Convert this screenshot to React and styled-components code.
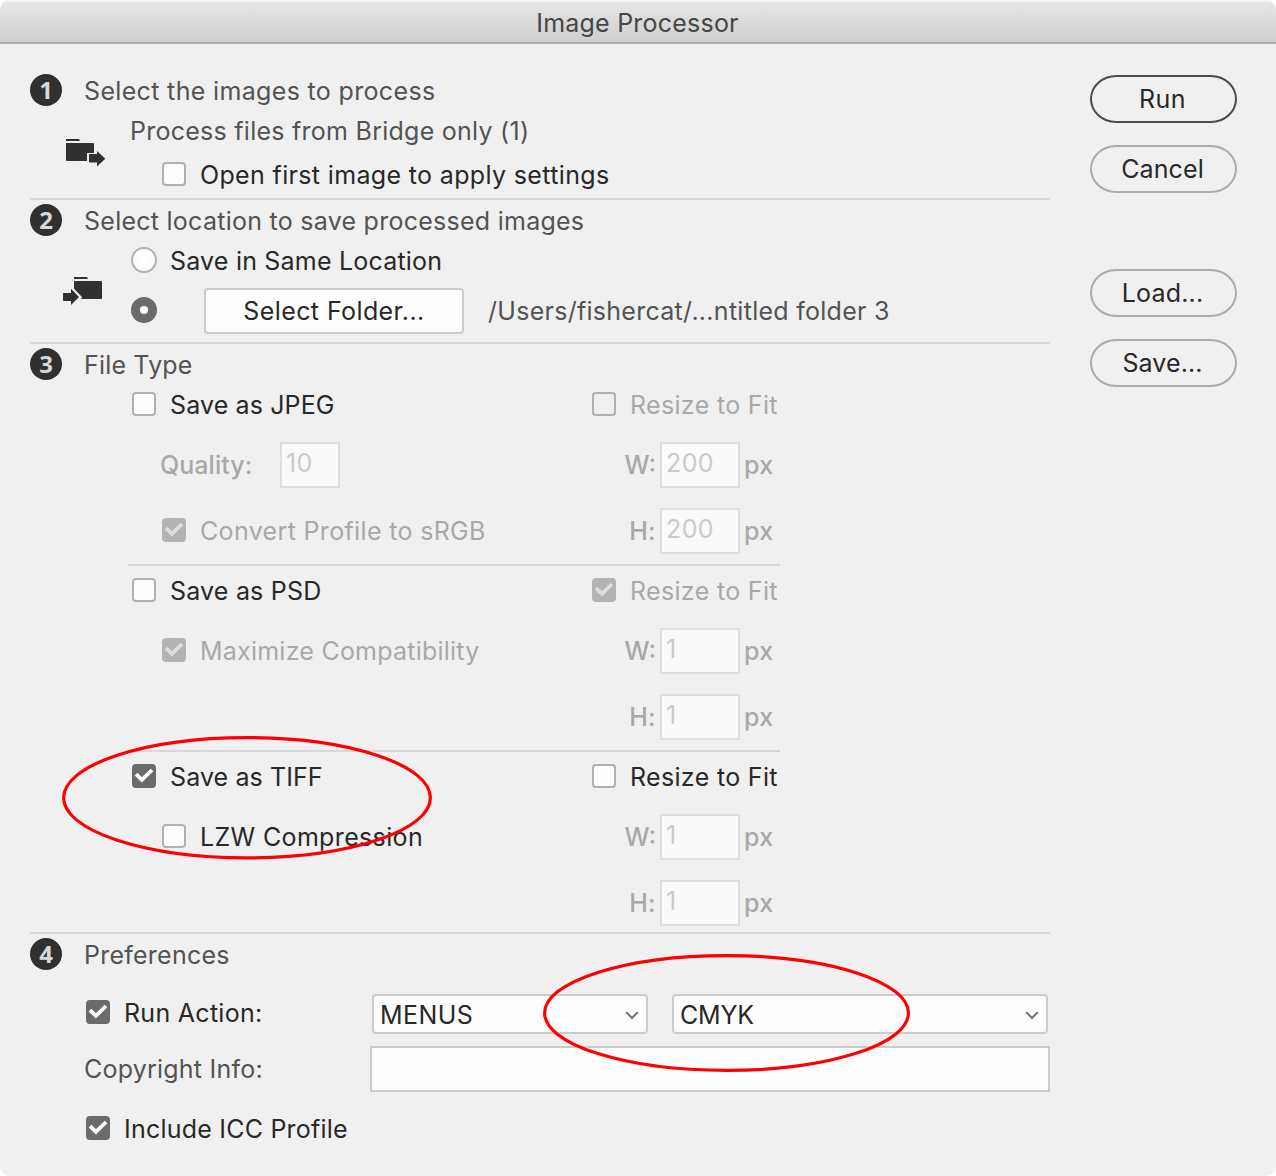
import React from "react";
import styled, { createGlobalStyle } from "styled-components";

const GlobalStyle = createGlobalStyle`
  body { margin: 0; background: #fff; }
  *, *::before, *::after { box-sizing: border-box; }
`;

const color = {
  window: "#f0f0f0",
  heading: "#535353",
  text: "#282828",
  disabled: "#a8a8a8",
  rule: "#d8d8d8",
};

const Window = styled.div`
  position: relative;
  width: 1276px;
  height: 1176px;
  overflow: hidden;
  border-radius: 10px;
  background: ${color.window};
  color: ${color.text};
  font-family: Inter, "Liberation Sans", sans-serif;
  font-size: 25px;
  line-height: 30px;
  letter-spacing: 0.3px;
  white-space: nowrap;
`;

const TitleBar = styled.header`
  display: flex;
  align-items: center;
  justify-content: center;
  height: 44px;
  padding: 4px 1px 0 0;
  border-bottom: 2px solid #acacac;
  background: linear-gradient(#e8e8e8, #cecece);
  box-shadow: inset 0 2px 0 #f3f3f3;
  color: #464646;
  letter-spacing: 0.22px;
`;

const Content = styled.div`
  display: flex;
  gap: 39.5px;
  padding: 0 30px;
`;

const Main = styled.main`
  width: 1020px;
  padding-top: 26px;
`;

const Sidebar = styled.aside`
  display: flex;
  flex-direction: column;
  gap: 22px;
  padding-top: 31px;
`;

const PillButton = styled.button`
  width: 147px;
  height: 48px;
  margin: ${(p) => (p.$apart ? "54px" : "0")} 0 0;
  padding: 0 1px 0 0;
  border: 2px solid ${(p) => (p.$primary ? "#4b4b4b" : "#ababab")};
  border-radius: 26px / 24px;
  background: transparent;
  color: ${color.text};
  font: inherit;
  letter-spacing: ${(p) => p.$ls ?? 0.2}px;
`;

const Section = styled.section`
  border-bottom: ${(p) => (p.$last ? "0" : `2px solid ${color.rule}`)};
  padding-bottom: ${(p) => p.$pad ?? 0}px;
`;

const SectionHeader = styled.div`
  display: flex;
  align-items: center;
  gap: 22px;
  height: 40px;
`;

const Badge = styled.span`
  display: flex;
  align-items: center;
  justify-content: center;
  width: 32px;
  height: 32px;
  border-radius: 50%;
  background: #303030;
  color: #d9d9d9;
  font: 700 24px/32px "Noto Sans", "Open Sans", sans-serif;
  letter-spacing: 0;
`;

const Label = styled.span`
  padding-top: ${(p) => p.$drop ?? 2}px;
  color: ${(p) => (p.$muted ? color.heading : "inherit")};
  letter-spacing: ${(p) => p.$ls ?? 0.3}px;
`;

const SectionBody = styled.div`
  display: flex;
`;

const IconCell = styled.div`
  width: 100px;
  padding: ${(p) => p.$top}px 0 0 25px;
  svg { display: block; }
`;

const Rows = styled.div`
  flex: 1;
`;

const Row = styled.div`
  display: flex;
  align-items: center;
  height: ${(p) => p.$h ?? 40}px;
  padding-left: ${(p) => p.$indent ?? 0}px;
`;

const CheckLabel = styled.label`
  display: flex;
  align-items: center;
  gap: 14px;
  height: ${(p) => p.$h ?? 40}px;
  padding-left: ${(p) => p.$indent ?? 0}px;
  color: ${(p) => (p.$disabled ? color.disabled : color.text)};
`;

const boxFill = ({ $on, $disabled }) => {
  if ($on) return $disabled ? "#b3b3b3" : "#6b6b6b";
  return $disabled ? "transparent" : "#fdfdfd";
};

const Box = styled.span`
  display: flex;
  width: 24px;
  height: 24px;
  border: ${(p) => (p.$on ? "0" : "2px solid #b1b1b1")};
  border-radius: 4px;
  background: ${boxFill};
  color: ${(p) => (p.$disabled ? "#dedede" : "#fff")};
`;

const Radio = styled.span`
  display: flex;
  align-items: center;
  justify-content: center;
  width: 26px;
  height: 26px;
  margin-right: 13px;
  border: 2px solid ${(p) => (p.$on ? "#6b6b6b" : "#b1b1b1")};
  border-radius: 50%;
  background: ${(p) => (p.$on ? "#6b6b6b" : "#fdfdfd")};
  &::after {
    content: "";
    width: 8px;
    height: 8px;
    border-radius: 50%;
    background: #fff;
  }
`;

const FolderButton = styled.button`
  width: 260px;
  height: 46px;
  margin: 2px 24px 0 34px;
  padding: 0;
  border: 2px solid #cbcbcb;
  border-radius: 4px;
  background: #fdfdfd;
  color: ${color.text};
  font: inherit;
  letter-spacing: 0.4px;
`;

const FormatGroup = styled.div`
  display: grid;
  grid-template-columns: 464px 1fr;
  width: 652px;
  margin-left: 98px;
  padding: ${(p) => p.$top}px 0 ${(p) => p.$bottom}px;
  border-bottom: ${(p) => (p.$last ? "0" : `2px solid ${color.rule}`)};
`;

const Column = styled.div`
  display: flex;
  flex-direction: column;
`;

const Fields = styled.div`
  display: flex;
  flex-direction: column;
  gap: 20px;
  margin-top: 18px;
`;

const FieldRow = styled.div`
  display: flex;
  align-items: center;
  height: 46px;
  padding-left: ${(p) => p.$indent ?? 0}px;
  color: ${color.disabled};
  font-weight: 500;
`;

const FieldName = styled.span`
  width: ${(p) => p.$w}px;
  text-align: ${(p) => (p.$right ? "right" : "left")};
  letter-spacing: ${(p) => p.$ls ?? 0}px;
`;

const NumberField = styled.span`
  width: ${(p) => p.$w}px;
  height: 46px;
  margin: 0 4px 0 ${(p) => p.$gap ?? 0}px;
  padding: 4px 4px 0;
  border: 2px solid #dedede;
  background: #fafafa;
  color: #cacaca;
  font-weight: 400;
  letter-spacing: 0.4px;
`;

const PrefRow = styled.div`
  display: grid;
  grid-template-columns: ${(p) => p.$cols};
  column-gap: 24px;
  height: ${(p) => p.$h}px;
  padding-left: 54px;
  margin-top: ${(p) => p.$top}px;
`;

const Select = styled.div`
  display: flex;
  align-items: center;
  justify-content: space-between;
  height: 40px;
  padding: 2px 7px 0 6px;
  border: 2px solid #cbcbcb;
  border-radius: 4px;
  background: #fdfdfd;
  letter-spacing: ${(p) => p.$ls}px;
`;

const TextField = styled.div`
  height: 46px;
  border: 2px solid #cbcbcb;
  background: #fdfdfd;
`;

const CopyrightLabel = styled.span`
  padding-top: 8px;
  color: ${color.heading};
  letter-spacing: 0.22px;
`;

const Annotation = styled.svg`
  position: absolute;
  left: ${(p) => p.$x}px;
  top: ${(p) => p.$y}px;
  pointer-events: none;
`;

const Check = ({ children, on, disabled, indent, h, ls }) => (
  <CheckLabel $indent={indent} $disabled={disabled} $h={h}>
    <Box $on={on} $disabled={disabled}>
      {on && (
        <svg width="24" height="24" viewBox="0 0 24 24" fill="none">
          <path d="M4 10.2 L9.9 15.9 L20 6" stroke="currentColor" strokeWidth="3.8" />
        </svg>
      )}
    </Box>
    <Label $ls={ls}>{children}</Label>
  </CheckLabel>
);

const Header = ({ n, children, ls }) => (
  <SectionHeader>
    <Badge>{n}</Badge>
    <Label $muted $ls={ls}>{children}</Label>
  </SectionHeader>
);

const SourceFolderIcon = () => (
  <svg width="60" height="45" viewBox="0 0 60 45" fill="#303030">
    <path d="M11 9h13l1 2H11z" />
    <path d="M11 13h27q1 0 1 1v9h-7v8H12q-1 0-1-1z" />
    <path d="M34 24h8v-3l8.3 7.8L42 36.5v-4h-7q-1 0-1-1z" />
  </svg>
);

const TargetFolderIcon = () => (
  <svg width="60" height="45" viewBox="0 0 60 45" fill="#303030">
    <path d="M19 7h13l1 2H19z" />
    <path d="M19 11h27q1 0 1 1v16q0 1-1 1H25.8l1.4-1.8L19 18.8z" />
    <path d="M8 23h8v-4.3l8 8.2-8 8V31H9q-1 0-1-1z" />
  </svg>
);

const Chevron = () => (
  <svg width="14" height="9" viewBox="0 0 14 9" fill="none">
    <path d="M1.2 1.2 L7 7 L12.8 1.2" stroke="#757575" strokeWidth="2" />
  </svg>
);

const Ellipse = ({ x, y, w, h }) => (
  <Annotation $x={x} $y={y} width={w} height={h}>
    <ellipse cx={w / 2} cy={h / 2} rx={w / 2 - 1.6} ry={h / 2 - 1.6} fill="none" stroke="#ff0000" strokeWidth="3.2" />
  </Annotation>
);

const ResizeColumn = ({ on, disabled, value }) => (
  <Column>
    <Check on={on} disabled={disabled} ls={0.33}>Resize to Fit</Check>
    <Fields>
      {["W:", "H:"].map((name) => (
        <FieldRow key={name}>
          <FieldName $w={64} $right $ls={name === "H:" ? 0.3 : 0}>{name}</FieldName>
          <NumberField $w={80} $gap={4}>{value}</NumberField>
          px
        </FieldRow>
      ))}
    </Fields>
  </Column>
);

export default function App() {
  return (
    <Window>
      <GlobalStyle />
      <TitleBar>Image Processor</TitleBar>
      <Content>
        <Main>
          <Section $pad={2}>
            <Header n="1" ls={0.34}>Select the images to process</Header>
            <SectionBody>
              <IconCell $top={20}><SourceFolderIcon /></IconCell>
              <Rows>
                <Row $h={42}><Label $muted $drop={0} $ls={0.26}>Process files from Bridge only (1)</Label></Row>
                <Check indent={32} h={44} ls={0.35}>Open first image to apply settings</Check>
              </Rows>
            </SectionBody>
          </Section>

          <Section $pad={2}>
            <Header n="2" ls={0.26}>Select location to save processed images</Header>
            <SectionBody>
              <IconCell $top={30}><TargetFolderIcon /></IconCell>
              <Rows>
                <Row $indent={1}>
                  <Radio />
                  <Label $ls={0.2}>Save in Same Location</Label>
                </Row>
                <Row $h={60} $indent={1}>
                  <Radio $on />
                  <FolderButton>Select Folder...</FolderButton>
                  <Label $muted $ls={0.28}>/Users/fishercat/...ntitled folder 3</Label>
                </Row>
              </Rows>
            </SectionBody>
          </Section>

          <Section>
            <Header n="3" ls={0.18}>File Type</Header>
            <FormatGroup $top={0} $bottom={10}>
              <Column>
                <Check indent={4} ls={0.13}>Save as JPEG</Check>
                <Fields>
                  <FieldRow $indent={32}>
                    <FieldName $w={120} $ls={0.05}>Quality:</FieldName>
                    <NumberField $w={60}>10</NumberField>
                  </FieldRow>
                  <Check on disabled indent={34} h={44} ls={0.34}>Convert Profile to sRGB</Check>
                </Fields>
              </Column>
              <ResizeColumn disabled value="200" />
            </FormatGroup>
            <FormatGroup $top={4} $bottom={10}>
              <Column>
                <Check indent={4} ls={0.2}>Save as PSD</Check>
                <Fields>
                  <Check on disabled indent={34} h={44} ls={0.23}>Maximize Compatibility</Check>
                </Fields>
              </Column>
              <ResizeColumn on disabled value="1" />
            </FormatGroup>
            <FormatGroup $top={4} $bottom={6} $last>
              <Column>
                <Check on indent={4} ls={0.1}>Save as TIFF</Check>
                <Fields>
                  <Check indent={34} h={44} ls={0.35}>LZW Compression</Check>
                </Fields>
              </Column>
              <ResizeColumn value="1" />
            </FormatGroup>
          </Section>

          <Section $last>
            <Header n="4" ls={0.24}>Preferences</Header>
            <PrefRow $cols="264px 276px 376px" $h={40} $top={20}>
              <Check on indent={2} h={36} ls={0.28}>Run Action:</Check>
              <Select $ls={0.4}>MENUS<Chevron /></Select>
              <Select $ls={-0.2}>CMYK<Chevron /></Select>
            </PrefRow>
            <PrefRow $cols="262px 680px" $h={46} $top={12}>
              <CopyrightLabel>Copyright Info:</CopyrightLabel>
              <TextField />
            </PrefRow>
            <PrefRow $cols="1fr" $h={44} $top={14}>
              <Check on indent={2} h={44} ls={0.22}>Include ICC Profile</Check>
            </PrefRow>
          </Section>
        </Main>

        <Sidebar>
          <PillButton $primary $ls={0.5}>Run</PillButton>
          <PillButton $ls={0.1}>Cancel</PillButton>
          <PillButton $apart $ls={0.2}>Load...</PillButton>
          <PillButton $ls={0.1}>Save...</PillButton>
        </Sidebar>
      </Content>
      <Ellipse x={62} y={736} w={370} h={123.5} />
      <Ellipse x={543} y={954} w={367} h={118} />
    </Window>
  );
}
